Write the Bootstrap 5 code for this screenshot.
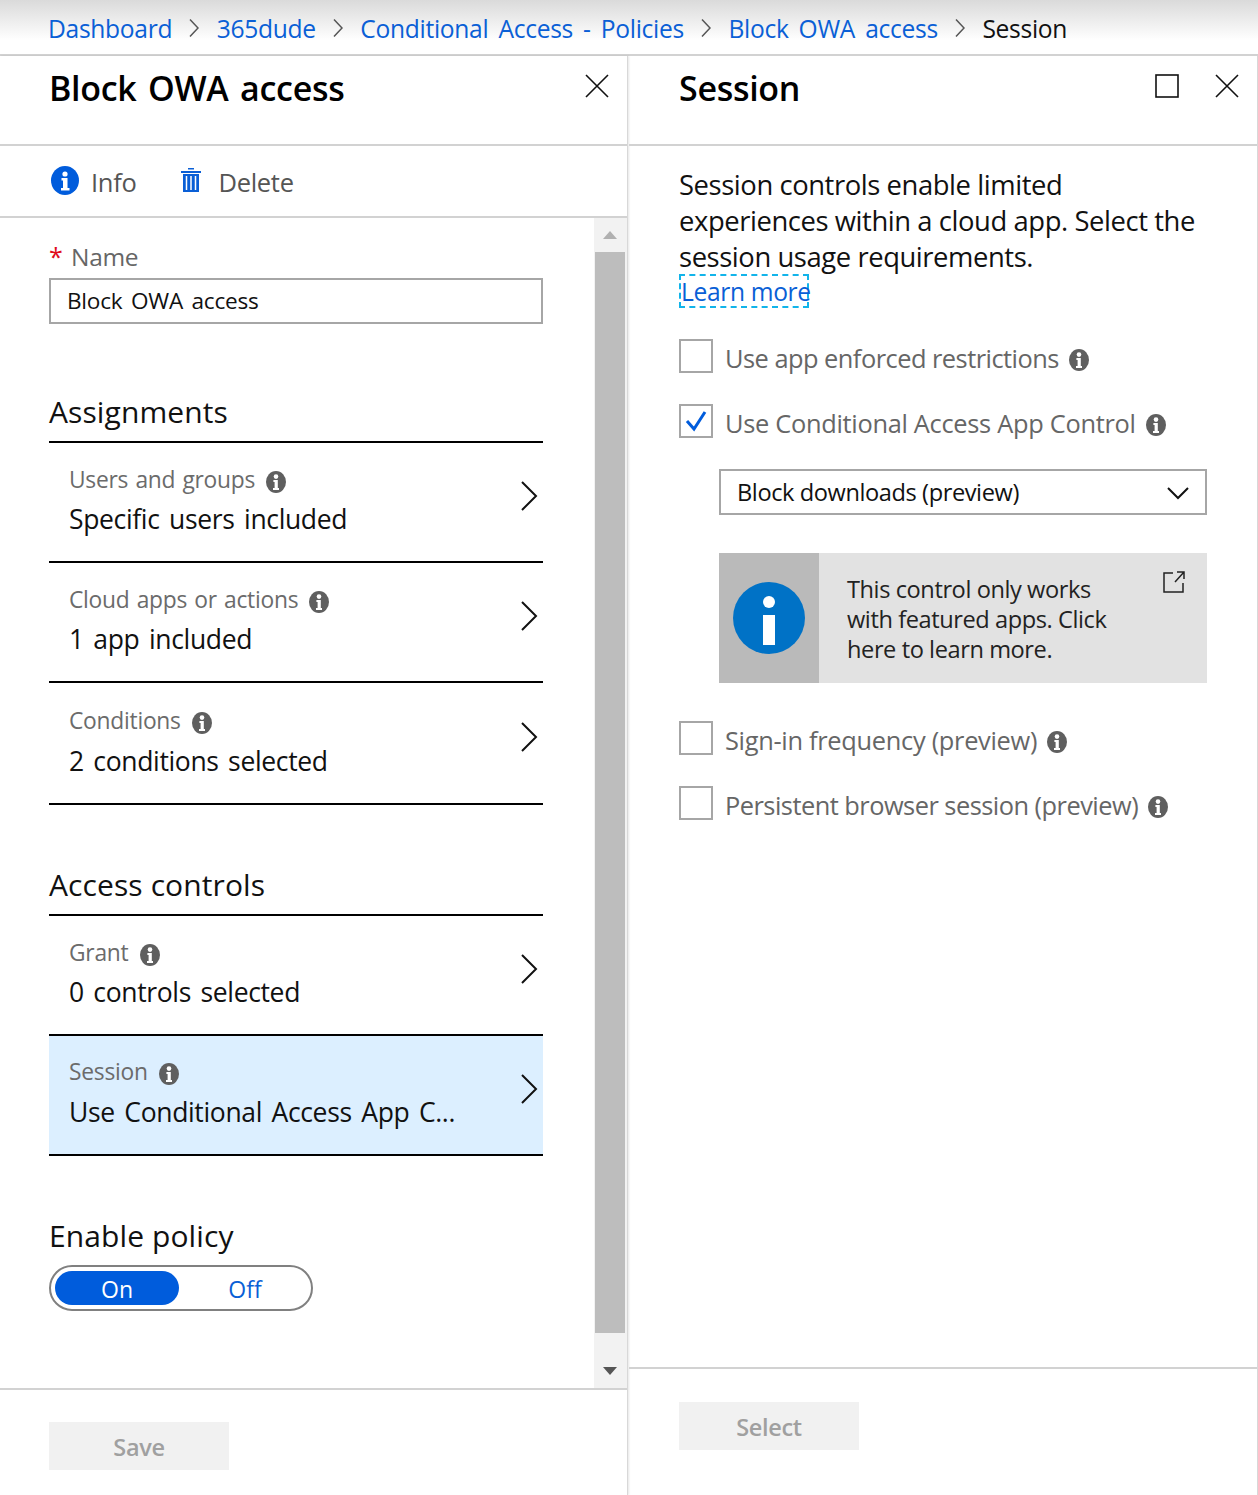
<!DOCTYPE html>
<html lang="en">
<head>
<meta charset="utf-8">
<title>Session</title>
<link rel="stylesheet" href="https://cdn.jsdelivr.net/npm/bootstrap@5.3.0/dist/css/bootstrap.min.css">
<style>
html,body{height:1495px;overflow:hidden}
body{font-family:"Open Sans","Noto Sans",sans-serif;color:#111;background:#fff;width:1258px}
.crumbbar{height:56px;background:linear-gradient(#dadada,#fff 75%);border-bottom:2px solid #d2d2d2;padding-left:48px;font-size:24.6px;letter-spacing:-.3px;word-spacing:4px}
.crumbbar .breadcrumb{height:54px;align-items:center;margin:0;padding-top:4px;flex-wrap:nowrap;white-space:nowrap}
.crumbbar a{color:#0a5fd6;text-decoration:none}
.crumbbar .sep{width:44.5px;display:flex;justify-content:center;color:#555;margin-top:-2px}
.panes{height:1439px}
.pane-a{width:628px;border-right:1px solid #d8d8d8;box-shadow:1px 0 2px rgba(0,0,0,.1)}
.pane-b{width:629px;margin-left:1px;border-right:1px solid #d8d8d8}
.pane-head{height:90px;border-bottom:2px solid #d2d2d2;padding:12px 18px 0 50px;flex:none}
.pane-a .pane-head{padding-left:49px}
.pane-head h1{font-size:34px;font-weight:600;letter-spacing:-.3px;word-spacing:3px;line-height:40px;margin:0;color:#000}
.xbtn{margin-top:6px;display:block}
.headtools{gap:36px}
.cmdbar{height:72px;border-bottom:2px solid #d2d2d2;padding-left:50px;font-size:25.5px;color:#555;flex:none;letter-spacing:-.3px}
.cmdbar .cmdtext{padding-top:2px}
.cmd-info{margin-right:11px}
.cmd-del{margin-left:44px}
.scrollarea{flex:1;min-height:0}
.formcol{width:594px;padding:23px 51px 0 49px;flex:none}
.fake-sb{width:33px;background:#f2f2f2;flex:none;padding-right:2px}
.sb-up{height:34px}.sb-thumb{height:1081px;background:#bdbdbd;margin-left:1px}.sb-down{flex:1;padding-bottom:12px}
.req{color:#e00b1c;font-size:25px;line-height:30px;width:22px;display:inline-block}
.fieldlabel{font-size:24.5px;line-height:32px;color:#666;letter-spacing:-.3px}
.txtfield.form-control{height:46px;border:2px solid #a6a6a6;border-radius:0;font-size:22.6px;padding:0 16px 2px;margin-top:5px;color:#111;letter-spacing:-.25px;word-spacing:3px}
.sect{font-size:30px;line-height:40px;margin:0;padding-bottom:9px;border-bottom:2px solid #000;letter-spacing:.1px;font-weight:400;color:#111}
.rows .list-group-item{height:120px;border:0;border-bottom:2px solid #000;border-radius:0;padding:20px 0 0 20px;background:transparent;color:#111}
.rows .list-group-item.tall{height:122px;padding-top:21px}
.rows .list-group-item.on{background:#dcefff;padding-top:19px}
.rowlabel{font-size:22.8px;line-height:34px;color:#6b6b6b;letter-spacing:-.25px;word-spacing:1.5px}
.rowval{font-size:26.5px;line-height:38px;margin-top:3px;letter-spacing:-.35px;word-spacing:3px;white-space:nowrap}
.tall .rowval,.on .rowval{margin-top:4px}
.rowchev{margin-right:5px;margin-top:17px;flex:none}
.on .rowchev{margin-top:18px}
.mini{vertical-align:-5px;margin-left:4px}
.gap-assign{margin-top:68px}
.gap-access{margin-top:60px}
.gap-enable{margin-top:60px}
.toggle{width:264px;height:46px;border:2px solid #808080;border-radius:23px;padding:4px;font-size:23px;margin-top:9px}
.toggle span{width:124px;height:34px;line-height:36px;text-align:center;color:#0a5fd6}
.toggle .unpicked{padding-left:8px}
.toggle .picked{background:#005cdc;color:#fff;border-radius:17px}
.pane-foot{height:107px;border-top:2px solid #d2d2d2;padding:32px 0 0 49px;flex:none}
.pane-foot.foot-b{height:128px;padding:33px 0 0 50px}
.dis.btn,.dis.btn:disabled{width:180px;height:48px;background:#f1f1f1;border:0;border-radius:0;color:#a0a0a0;font-size:23.5px;font-weight:600;opacity:1;padding:4px 0 0;letter-spacing:-.3px}
.bodycol{padding:21px 50px 0 50px;flex:1;min-height:0}
.intro{font-size:27.4px;line-height:36px;color:#111;letter-spacing:-.42px;margin:0}
.learn{display:inline-block;border:2px dashed #12b4ea;color:#0a5fd6;text-decoration:none;height:34px;line-height:32px;width:130px;font-size:24.6px;letter-spacing:-.35px;white-space:nowrap;overflow:visible;margin-top:-1px;vertical-align:top}
.chk{width:34px;height:34px;border:2px solid #a6a6a6;background:#fff;flex:none;margin-right:12px}
.chkrow{font-size:25.4px;color:#666;letter-spacing:-.3px;line-height:38px;height:34px;white-space:nowrap;align-items:flex-start}
.chkrow.tight{letter-spacing:-.52px}
.chkrow .tip{margin:10px 0 0 10px;flex:none}
.chkrow.first{margin-top:31px}
.chkrow.next{margin-top:31px}
.chkrow.after{margin-top:38px}
.pickbox{width:488px;height:46px;margin:31px 0 0 40px;border:2px solid #a6a6a6;padding:2px 16px 0;font-size:23.6px;letter-spacing:-.41px;color:#111}
.notice{width:488px;height:130px;margin:38px 0 0 40px;background:#e2e2e2}
.notice-l{width:100px;background:#bababa;flex:none}
.notice-t{padding:21px 0 0 28px;font-size:23.6px;line-height:30px;letter-spacing:-.42px;color:#222;width:300px}
.notice-x{margin:17px 21px 0 auto}
</style>
</head>
<body>
<svg width="0" height="0" class="position-absolute">
<symbol id="ii" viewBox="0 0 20 22"><ellipse cx="10" cy="11" rx="10" ry="11" fill="#5f5f5f"/><circle cx="10" cy="5.6" r="2.3" fill="#fff"/><path d="M7.4 9h4.4v8h1.2v2H7v-2h1.6v-6H7.4z" fill="#fff"/></symbol>
<symbol id="xx" viewBox="0 0 24 24"><path d="M1 1l22 22M23 1L1 23" stroke="#111" stroke-width="1.6" fill="none"/></symbol>
<symbol id="cv" viewBox="0 0 18 32"><path d="M2 2l14 14L2 30" stroke="#111" stroke-width="2" fill="none"/></symbol>
<symbol id="sm" viewBox="0 0 10 20"><path d="M1 1.500l8 8.500-8 8.500" stroke="#555" stroke-width="1.500" fill="none"/></symbol>
</svg>

<nav class="crumbbar" aria-label="breadcrumb">
<div class="breadcrumb">
<a href="#">Dashboard</a><span class="sep"><svg width="10" height="20"><use href="#sm"/></svg></span>
<a href="#">365dude</a><span class="sep"><svg width="10" height="20"><use href="#sm"/></svg></span>
<a href="#">Conditional Access - Policies</a><span class="sep"><svg width="10" height="20"><use href="#sm"/></svg></span>
<a href="#">Block OWA access</a><span class="sep"><svg width="10" height="20"><use href="#sm"/></svg></span>
<span>Session</span>
</div>
</nav>

<div class="panes d-flex">
<section class="pane-a d-flex flex-column">
<div class="pane-head d-flex justify-content-between">
<h1>Block OWA access</h1>
<svg class="xbtn" width="24" height="24"><use href="#xx"/></svg>
</div>
<div class="cmdbar d-flex align-items-center">
<span class="d-flex align-items-center"><svg width="30" height="30" viewBox="0 0 30 30" class="cmd-info"><ellipse cx="15" cy="14.500" rx="14" ry="14.500" fill="#005cdc"/><circle cx="15" cy="8" r="2.600" fill="#fff"/><path d="M11.500 12h6v10h2v2.500h-8.500V22h2v-7.500h-1.500z" fill="#fff"/></svg><span class="cmdtext">Info</span></span>
<span class="d-flex align-items-center cmd-del"><svg width="22" height="28" viewBox="0 0 22 28" class="me-3"><path d="M8 1h6v1.500H8zM1 4h20v2H1zM3 7h16v18H3z" fill="#0a5fd6"/><path d="M6.500 9v14M11 9v14M15.500 9v14" stroke="#fff" stroke-width="1.500"/></svg><span class="cmdtext">Delete</span></span>
</div>
<div class="scrollarea d-flex">
<div class="formcol">
<div class="fieldlabel"><span class="req">*</span>Name</div>
<input class="form-control txtfield" value="Block OWA access" aria-label="Name">
<h2 class="sect gap-assign">Assignments</h2>
<div class="list-group rows">
<div class="list-group-item d-flex justify-content-between"><div><div class="rowlabel">Users and groups <svg class="mini" width="20" height="22"><use href="#ii"/></svg></div><div class="rowval">Specific users included</div></div><svg class="rowchev" width="18" height="32"><use href="#cv"/></svg></div>
<div class="list-group-item d-flex justify-content-between"><div><div class="rowlabel">Cloud apps or actions <svg class="mini" width="20" height="22"><use href="#ii"/></svg></div><div class="rowval">1 app included</div></div><svg class="rowchev" width="18" height="32"><use href="#cv"/></svg></div>
<div class="list-group-item tall d-flex justify-content-between"><div><div class="rowlabel">Conditions <svg class="mini" width="20" height="22"><use href="#ii"/></svg></div><div class="rowval">2 conditions selected</div></div><svg class="rowchev" width="18" height="32"><use href="#cv"/></svg></div>
</div>
<h2 class="sect gap-access">Access controls</h2>
<div class="list-group rows">
<div class="list-group-item d-flex justify-content-between"><div><div class="rowlabel">Grant <svg class="mini" width="20" height="22"><use href="#ii"/></svg></div><div class="rowval">0 controls selected</div></div><svg class="rowchev" width="18" height="32"><use href="#cv"/></svg></div>
<div class="list-group-item on d-flex justify-content-between"><div><div class="rowlabel">Session <svg class="mini" width="20" height="22"><use href="#ii"/></svg></div><div class="rowval">Use Conditional Access App C...</div></div><svg class="rowchev" width="18" height="32"><use href="#cv"/></svg></div>
</div>
<h2 class="sect border-0 p-0 gap-enable">Enable policy</h2>
<div class="toggle d-flex"><span class="picked">On</span><span class="unpicked">Off</span></div>
</div>
<div class="fake-sb d-flex flex-column">
<div class="sb-up d-flex justify-content-center align-items-center"><svg width="16" height="10"><path d="M8 1l7 8H1z" fill="#b0b0b0"/></svg></div>
<div class="sb-thumb"></div>
<div class="sb-down d-flex justify-content-center align-items-end"><svg width="16" height="10"><path d="M8 9l7-8H1z" fill="#555"/></svg></div>
</div>
</div>
<div class="pane-foot"><button class="btn dis" disabled>Save</button></div>
</section>

<section class="pane-b d-flex flex-column">
<div class="pane-head d-flex justify-content-between">
<h1>Session</h1>
<div class="d-flex headtools"><svg class="xbtn" width="24" height="24"><rect x="1" y="1" width="22" height="22" fill="none" stroke="#111" stroke-width="1.600"/></svg><svg class="xbtn" width="24" height="24"><use href="#xx"/></svg></div>
</div>
<div class="bodycol">
<p class="intro">Session controls enable limited experiences within a cloud app. Select the session usage requirements.</p>
<a class="learn" href="#">Learn more</a>
<div class="chkrow tight d-flex first"><span class="chk"></span>Use app enforced restrictions<svg class="tip" width="20" height="22"><use href="#ii"/></svg></div>
<div class="chkrow d-flex next"><span class="chk d-flex align-items-center justify-content-center"><svg width="24" height="22" viewBox="0 0 24 22"><path d="M3 11l7 8L21 2" stroke="#005cdc" stroke-width="3" fill="none"/></svg></span>Use Conditional Access App Control<svg class="tip" width="20" height="22"><use href="#ii"/></svg></div>
<div class="pickbox d-flex align-items-center justify-content-between">Block downloads (preview)<svg width="22" height="14" viewBox="0 0 22 14"><path d="M1 2l10 10L21 2" stroke="#111" stroke-width="2" fill="none"/></svg></div>
<div class="notice d-flex">
<div class="notice-l d-flex align-items-center justify-content-center"><svg width="72" height="72" viewBox="0 0 72 72"><circle cx="36" cy="36" r="36" fill="#0072c6"/><circle cx="36" cy="20" r="6" fill="#fff"/><path d="M30 33h12v30H30z" fill="#fff"/></svg></div>
<div class="notice-t">This control only works with featured apps. Click here to learn more.</div>
<svg class="notice-x" width="24" height="24" viewBox="0 0 24 24"><path d="M11 3H2v19h19v-9M13 12L22 2M15 2h7v7" stroke="#222" stroke-width="1.500" fill="none"/></svg>
</div>
<div class="chkrow d-flex after"><span class="chk"></span>Sign-in frequency (preview)<svg class="tip" width="20" height="22"><use href="#ii"/></svg></div>
<div class="chkrow tight d-flex next"><span class="chk"></span>Persistent browser session (preview)<svg class="tip" width="20" height="22"><use href="#ii"/></svg></div>
</div>
<div class="pane-foot foot-b"><button class="btn dis" disabled>Select</button></div>
</section>
</div>
<script src="https://cdn.jsdelivr.net/npm/bootstrap@5.3.0/dist/js/bootstrap.bundle.min.js"></script>
</body>
</html>
